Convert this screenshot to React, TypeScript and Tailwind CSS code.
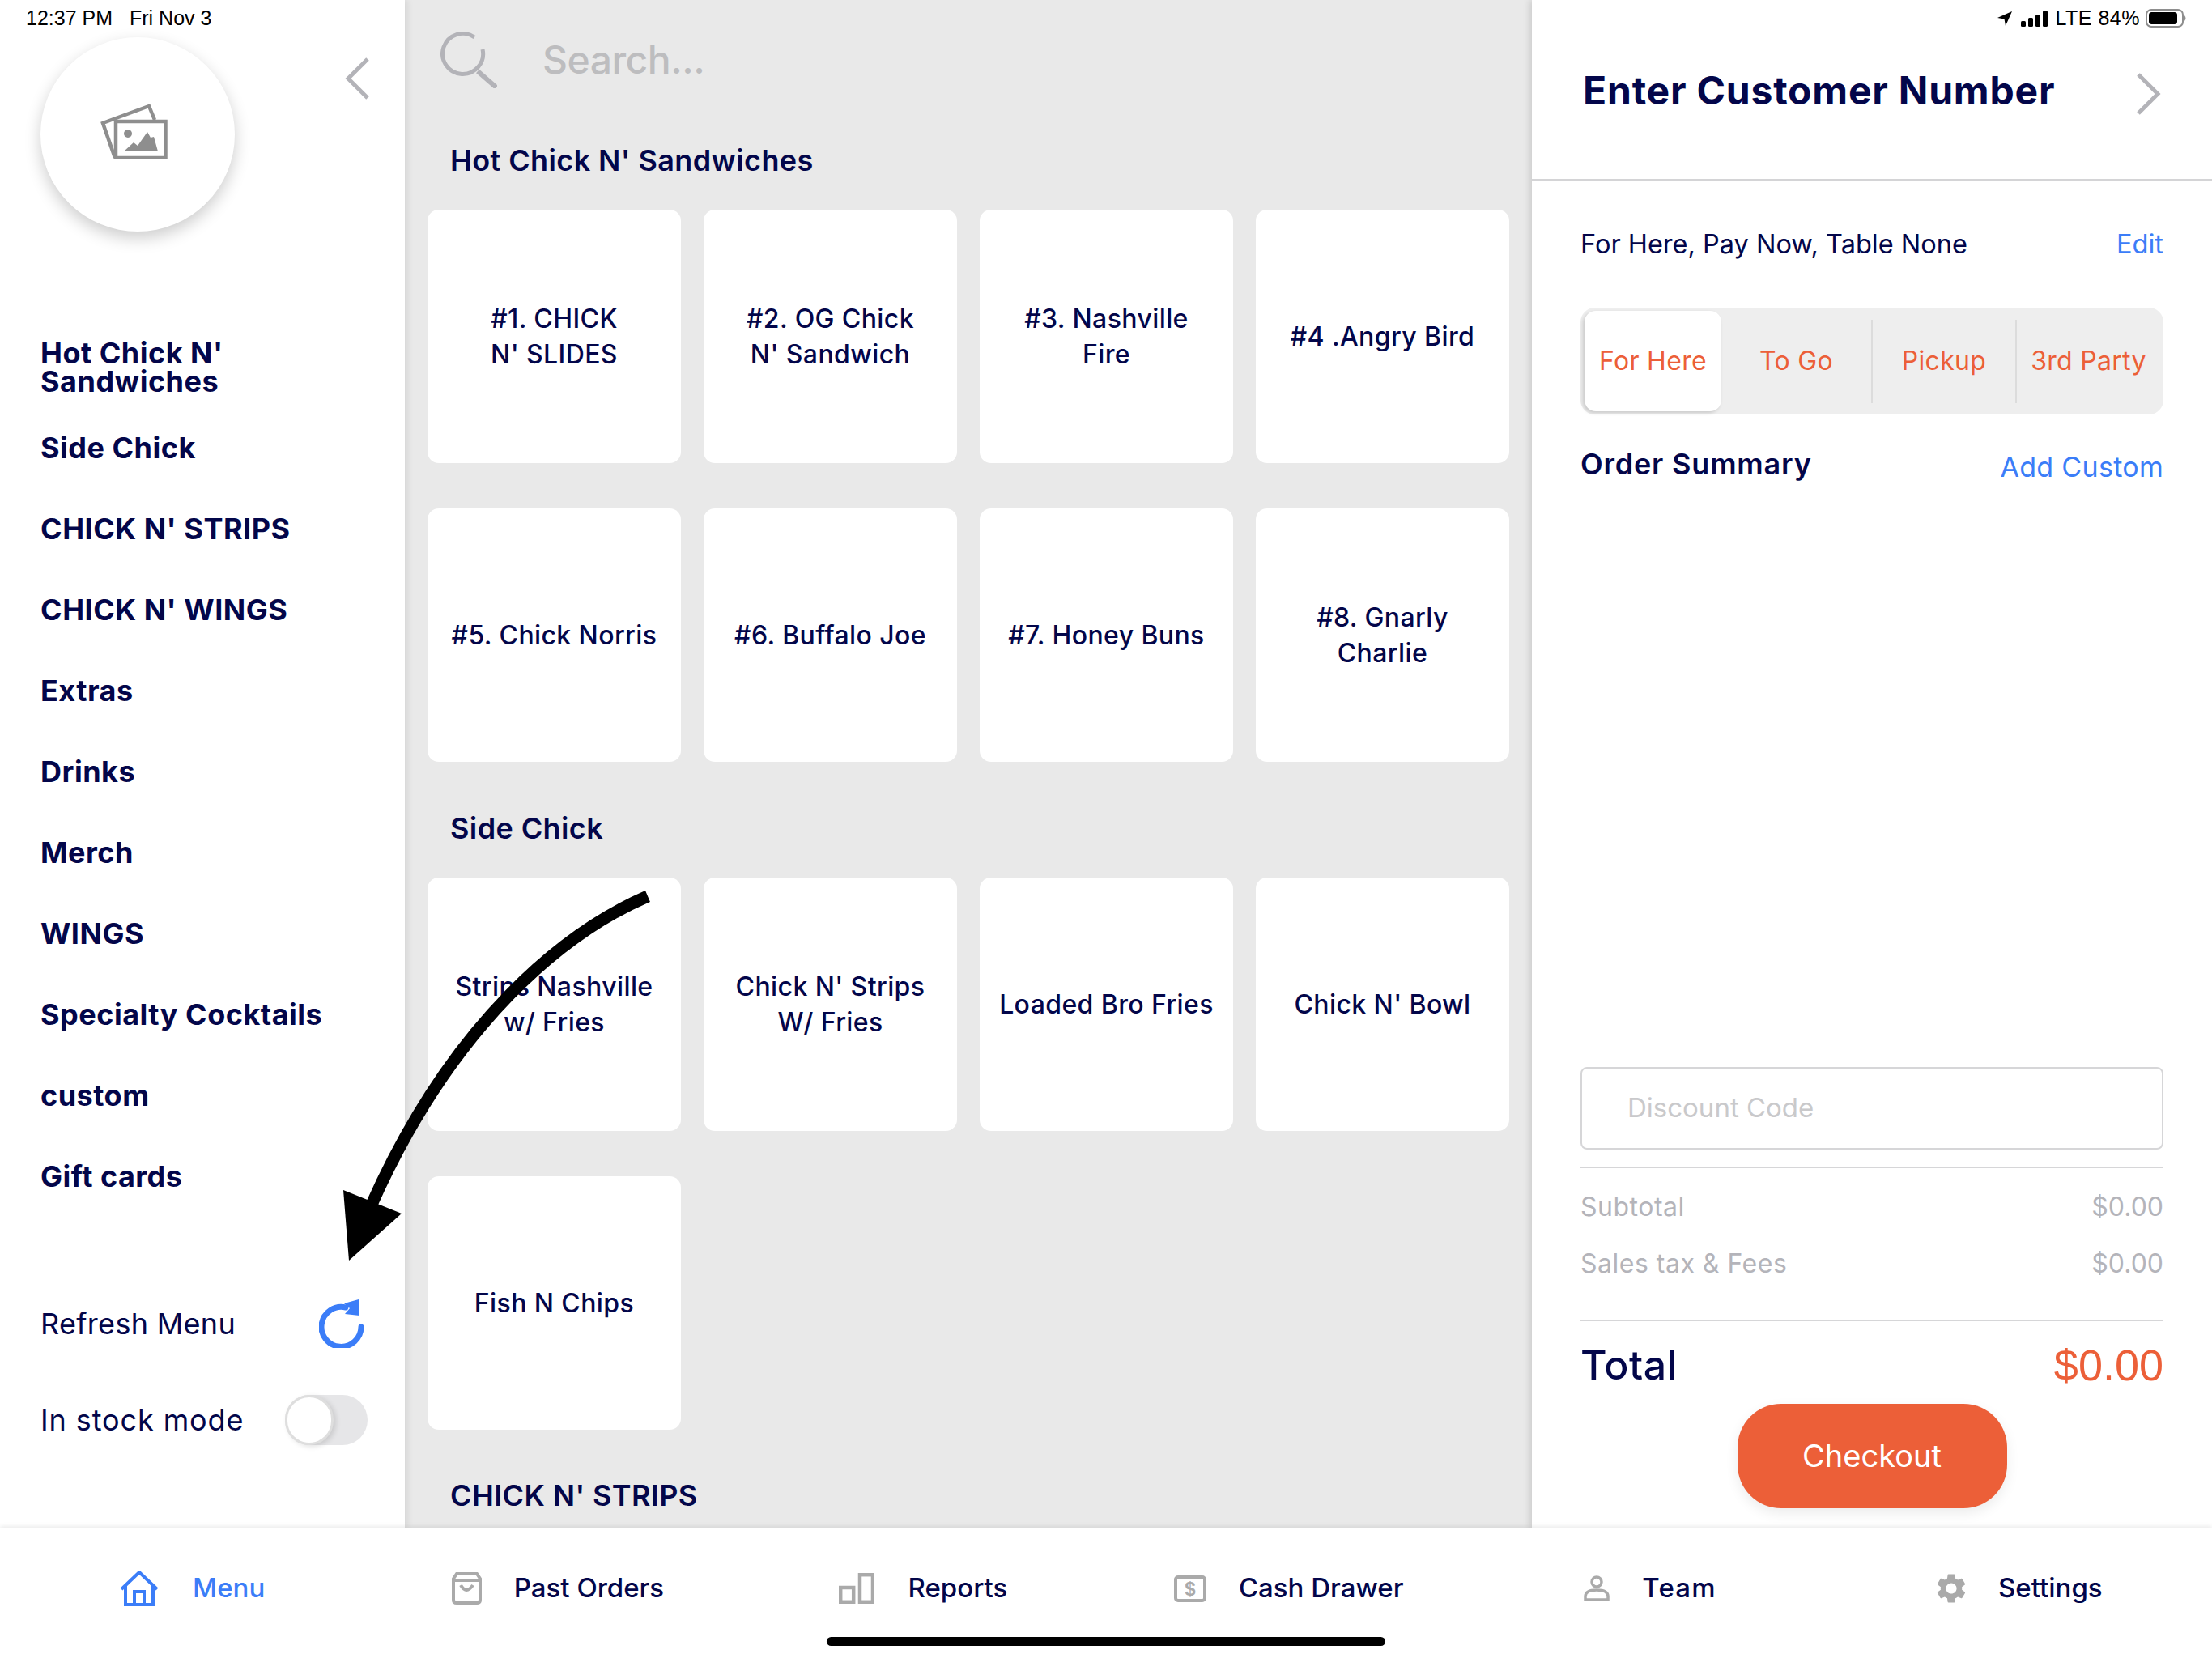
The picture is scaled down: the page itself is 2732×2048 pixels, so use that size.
import { MdSettings } from "react-icons/md";

const ink = "text-[#03064a]";

const sideItems = [
  "Side Chick",
  "CHICK N' STRIPS",
  "CHICK N' WINGS",
  "Extras",
  "Drinks",
  "Merch",
  "WINGS",
  "Specialty Cocktails",
  "custom",
  "Gift cards",
];

function Card({ label }: { label: string }) {
  return (
    <div className={`w-[313px] h-[313px] rounded-[14px] bg-white flex items-center justify-center text-center whitespace-pre-wrap text-[32px] leading-[44px] font-medium tracking-[0.4px] ${ink}`}>
      {label}
    </div>
  );
}

function ImageIcon() {
  return (
    <svg width="83" height="69" viewBox="0 0 83 69" fill="none" stroke="#8e8e8e" strokeWidth="4.5">
      <path d="M67 20 L60 3 L3 24 L18 67" />
      <rect x="19" y="22" width="61.5" height="45" />
      <circle cx="34" cy="37" r="5" fill="#8e8e8e" stroke="none" />
      <path d="M29 59 L41 48 L46 52 L58 35 L62 42 L66 41 L71 59 Z" fill="#8e8e8e" stroke="none" />
    </svg>
  );
}

function Sidebar() {
  return (
    <aside className="w-[500px] shrink-0 bg-white flex flex-col pl-[50px] pr-[40px] pt-[46px] relative z-10 shadow-[3px_0_8px_rgba(0,0,0,0.09)]">
      <div className="flex justify-between items-start">
        <div className="w-[240px] h-[240px] rounded-full bg-white flex items-center justify-center shadow-[0_8px_20px_rgba(0,0,0,0.2)] pb-[7px] pr-[9px]">
          <ImageIcon />
        </div>
        <svg className="mt-[25px] mr-[4px]" width="30" height="52" viewBox="0 0 30 52" fill="none" stroke="#b3b3b8" strokeWidth="5">
          <path d="M28 2 L4 26 L28 50" />
        </svg>
      </div>
      <div className={`mt-[133px] text-[36px] leading-[35px] font-bold tracking-[0.5px] ${ink}`}>
        Hot Chick N'<br />Sandwiches
      </div>
      <div className={`flex flex-col mt-[14px] text-[36px] leading-[100px] font-bold tracking-[0.5px] ${ink}`}>
        {sideItems.map((s) => (
          <div key={s} className="h-[100px] whitespace-nowrap">{s}</div>
        ))}
      </div>
      <div className={`mt-[102px] flex items-center justify-between h-[60px] text-[36px] ${ink}`}>
        <span className="tracking-[0.3px]">Refresh Menu</span>
        <svg width="56" height="60" viewBox="0 0 56 60" fill="none" className="mr-[10px]">
          <path d="M52 34 A24.5 24.5 0 1 1 33 10" stroke="#3b7df8" strokeWidth="7" strokeLinecap="round" />
          <path d="M49 0 L50 20 L32 18 L38 11 L31 5 Z" fill="#3b7df8" />
        </svg>
      </div>
      <div className={`mt-[58px] flex items-center justify-between h-[62px] text-[36px] ${ink}`}>
        <span className="tracking-[0.9px]">In stock mode</span>
        <div className="w-[102px] h-[62px] rounded-full bg-[#e6e6e8] mr-[6px] relative">
          <div className="absolute left-0 top-0 w-[60px] h-[62px] rounded-full bg-white border-[3px] border-[#dedede] shadow-[3px_2px_6px_rgba(0,0,0,0.12)]" />
        </div>
      </div>
    </aside>
  );
}

function SectionTitle({ children, className }: { children: string; className: string }) {
  return <h2 className={`text-[36px] leading-[44px] font-semibold tracking-[0.4px] pl-[28px] whitespace-nowrap ${ink} ${className}`}>{children}</h2>;
}

function MainPanel() {
  return (
    <main className="flex-1 bg-[#e9e9e9] overflow-hidden px-[28px]">
      <div className="flex items-center h-[144px] pt-[4px] pl-[16px]">
        <svg width="70" height="70" viewBox="0 0 70 70" fill="none" stroke="#b3b3b8" strokeWidth="5">
          <path d="M42 7 A25 25 0 1 0 52 22" />
          <path d="M46 49 L69 69" strokeWidth="6" />
        </svg>
        <span className="ml-[56px] text-[48px] font-medium text-[#bdbdbf] tracking-[-0.5px]">Search...</span>
      </div>
      <SectionTitle className="mt-[32px]">Hot Chick N' Sandwiches</SectionTitle>
      <div className="mt-[39px] grid grid-cols-[repeat(4,313px)] gap-x-[28px] gap-y-[56px]">
        {[
          "#1. CHICK\nN' SLIDES",
          "#2. OG Chick\nN' Sandwich",
          "#3. Nashville\nFire",
          "#4 .Angry Bird",
          "#5. Chick Norris",
          "#6. Buffalo Joe",
          "#7. Honey Buns",
          "#8. Gnarly\nCharlie",
        ].map((l) => (
          <Card key={l} label={l} />
        ))}
      </div>
      <SectionTitle className="mt-[60px]">Side Chick</SectionTitle>
      <div className="mt-[39px] grid grid-cols-[repeat(4,313px)] gap-x-[28px] gap-y-[56px]">
        {["Strips Nashville\nw/ Fries", "Chick N' Strips\nW/ Fries", "Loaded Bro Fries", "Chick N' Bowl", "Fish N Chips"].map((l) => (
          <Card key={l} label={l} />
        ))}
      </div>
      <SectionTitle className="mt-[59px]">CHICK N' STRIPS</SectionTitle>
    </main>
  );
}

function OrderPanel() {
  return (
    <section className="w-[840px] shrink-0 bg-white relative z-10 flex flex-col shadow-[-3px_0_8px_rgba(0,0,0,0.12)]">
      <div className="h-[223px] border-b-2 border-[#d4d4d6] flex items-start justify-between pl-[63px] pr-[62px] pt-[80px]">
        <h1 className={`text-[48px] leading-[64px] font-bold tracking-[0.8px] whitespace-nowrap ${ink}`}>Enter Customer Number</h1>
        <svg className="mt-[10px]" width="32" height="52" viewBox="0 0 32 52" fill="none" stroke="#b3b3b8" strokeWidth="5">
          <path d="M3 2 L27 26 L3 50" />
        </svg>
      </div>
      <div className="px-[60px] flex-1 flex flex-col">
        <div className="mt-[57px] h-[44px] flex items-center justify-between text-[32.5px]">
          <span className={ink}>For Here, Pay Now, Table None</span>
          <span className="text-[#3b7df8]">Edit</span>
        </div>
        <div className="mt-[56px] h-[132px] rounded-[18px] bg-[#eeeeee] flex items-center text-[32px] tracking-[0.3px] text-[#ec5f38] pl-[5px] pr-[4px]">
          <div className="w-[169px] h-[124px] rounded-[14px] bg-white flex items-center justify-center shadow-[-2px_2px_4px_rgba(0,0,0,0.16)]">For Here</div>
          <div className="w-[185px] flex items-center justify-center">To Go</div>
          <div className="w-[180px] h-[103px] border-l-2 border-r-2 border-[#dcdcdc] flex items-center justify-center">Pickup</div>
          <div className="flex-1 flex items-center justify-center whitespace-nowrap">3rd Party</div>
        </div>
        <div className="mt-[38px] h-[46px] flex items-center justify-between">
          <span className={`text-[36px] font-semibold tracking-[0.8px] ${ink}`}>Order Summary</span>
          <span className="text-[34px] tracking-[0.3px] text-[#3b7df8] mt-[6px]">Add Custom</span>
        </div>
        <div className="mt-[722px] h-[102px] rounded-[8px] border-2 border-[#d6d6d8] flex items-center pl-[56px] text-[33px] text-[#c9c9cb]">
          Discount Code
        </div>
        <div className="mt-[21px] border-t-2 border-[#d6d6d8] pt-[26px] text-[32px] text-[#b4b4ba]">
          <div className="h-[44px] flex items-center justify-between">
            <span className="tracking-[0.5px]">Subtotal</span>
            <span>$0.00</span>
          </div>
          <div className="mt-[26px] h-[44px] flex items-center justify-between">
            <span className="tracking-[0.5px]">Sales tax &amp; Fees</span>
            <span>$0.00</span>
          </div>
        </div>
        <div className="mt-[47px] border-t-2 border-[#d6d6d8] pt-[20px] flex items-center justify-between h-[90px]">
          <span className={`text-[50px] font-medium tracking-[0.5px] ${ink}`}>Total</span>
          <span className="text-[54px] text-[#ec5f38] font-['Liberation_Sans',sans-serif]">$0.00</span>
        </div>
        <div className="mt-[14px] mx-auto w-[333px] h-[129px] rounded-[54px] bg-[#ec5f38] flex items-center justify-center text-white text-[38px] shadow-[0_6px_16px_rgba(0,0,0,0.08)]">
          Checkout
        </div>
      </div>
    </section>
  );
}

function NavItem({ label, icon, active, gap, shift }: { label: string; icon: React.ReactNode; active?: boolean; gap: string; shift?: string }) {
  return (
    <div className={`flex items-center justify-center ${gap} ${shift ?? ""} text-[33px] font-medium whitespace-nowrap ${active ? "text-[#3b7df8]" : ink}`}>
      {icon}
      <span>{label}</span>
    </div>
  );
}

function BottomNav() {
  const grey = "#aaaaaa";
  return (
    <nav className="h-[160px] bg-white relative z-20 shadow-[0_-2px_6px_rgba(0,0,0,0.1)] flex flex-col">
      <div className="grid grid-cols-6 px-[12px] pt-[14px] h-[134px] items-center">
        <NavItem active gap="gap-[42px]" label="Menu" icon={
          <svg width="48" height="44" viewBox="0 0 48 44" fill="none" stroke="#3b7df8" strokeWidth="4">
            <path d="M2 23 L24 2 L46 23" />
            <path d="M7 19 V42 H41 V19" />
            <path d="M18 42 V26 H30 V42" />
          </svg>
        } />
        <NavItem gap="gap-[40px]" label="Past Orders" icon={
          <svg width="37" height="40" viewBox="0 0 37 40" fill="none" stroke={grey} strokeWidth="4">
            <path d="M6 2 H31 L35 8 V34 Q35 38 31 38 H6 Q2 38 2 34 V8 Z" />
            <path d="M2 10 H35" />
            <path d="M11 16 Q18 28 26 16" />
          </svg>
        } />
        <NavItem gap="gap-[41px]" label="Reports" icon={
          <svg width="44" height="38" viewBox="0 0 44 38" fill="none" stroke={grey} strokeWidth="4.5">
            <rect x="2.2" y="18" width="16" height="17.8" />
            <rect x="26" y="2.2" width="16" height="33.6" />
          </svg>
        } />
        <NavItem gap="gap-[40px]" label="Cash Drawer" icon={
          <svg width="40" height="33" viewBox="0 0 40 33" fill="none">
            <rect x="2" y="2" width="36" height="29" rx="3" stroke={grey} strokeWidth="4" />
            <text x="20" y="25" textAnchor="middle" fontSize="24" fontWeight="700" fill={grey} fontFamily="Liberation Sans">$</text>
          </svg>
        } />
        <NavItem gap="gap-[40px]" shift="pr-[10px] tracking-[1.2px]" label="Team" icon={
          <svg width="32" height="32" viewBox="0 0 32 32" fill="none" stroke={grey} strokeWidth="3.5">
            <circle cx="16" cy="8" r="6" />
            <path d="M2 30 V26 Q2 18 16 18 Q30 18 30 26 V30 Z" />
          </svg>
        } />
        <NavItem gap="gap-[40px]" label="Settings" icon={<MdSettings size={44} color={grey} className="-mx-[4px]" />} />
      </div>
      <div className="w-[690px] h-[11px] rounded-full bg-black mx-auto" />
    </nav>
  );
}

function StatusBar() {
  return (
    <div className="absolute left-0 top-0 w-full h-[46px] z-30 flex items-center justify-between pl-[32px] pr-[30px] text-[25px] text-black font-['Liberation_Sans',sans-serif]">
      <div className="flex gap-[21px]">
        <span>12:37 PM</span>
        <span>Fri Nov 3</span>
      </div>
      <div className="flex items-center">
        <svg width="20" height="20" viewBox="0 0 20 20" fill="#000"><path d="M19 1 L1 9 L9.5 10.5 L11 19 Z" /></svg>
        <svg className="ml-[10px]" width="34" height="20" viewBox="0 0 34 20" fill="#000">
          <rect x="0" y="13" width="6" height="7" rx="1.5" />
          <rect x="9" y="9" width="6" height="11" rx="1.5" />
          <rect x="18" y="5" width="6" height="15" rx="1.5" />
          <rect x="27" y="0" width="6" height="20" rx="1.5" />
        </svg>
        <span className="ml-[9px] tracking-[0.5px]">LTE 84%</span>
        <svg className="ml-[7px]" width="52" height="24" viewBox="0 0 52 24" fill="none">
          <rect x="1" y="1" width="45" height="21" rx="6" stroke="#8e8e8e" strokeWidth="2" />
          <rect x="4" y="4" width="35" height="15" rx="3.5" fill="#000" />
          <path d="M48 8 Q51 11.5 48 15 Z" fill="#8e8e8e" />
        </svg>
      </div>
    </div>
  );
}

export default function App() {
  return (
    <div className="relative w-[2732px] h-[2048px] overflow-hidden bg-white flex flex-col font-['Inter',sans-serif]">
      <StatusBar />
      <div className="flex h-[1888px]">
        <Sidebar />
        <MainPanel />
        <OrderPanel />
      </div>
      <BottomNav />
      <svg className="absolute left-0 top-0 z-40 pointer-events-none" width="2732" height="2048" viewBox="0 0 2732 2048" fill="none">
        <path d="M800 1107 C700 1150 560 1260 458 1490" stroke="#000" strokeWidth="15" />
        <path d="M424 1470 L496 1499 L431 1557 Z" fill="#000" />
      </svg>
    </div>
  );
}
